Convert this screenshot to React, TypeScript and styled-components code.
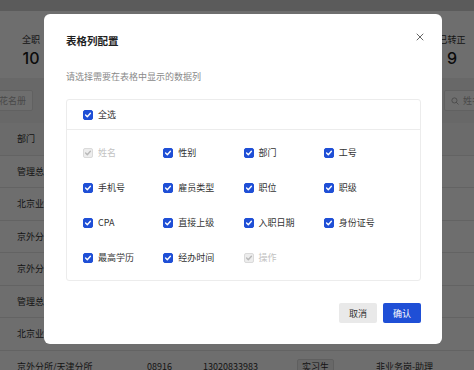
import React from "react";
import styled, { createGlobalStyle } from "styled-components";

const GlobalStyle = createGlobalStyle`
  html, body { margin: 0; padding: 0; }
  body {
    width: 474px;
    height: 370px;
    overflow: hidden;
    font-family: "Noto Sans CJK SC", "Noto Sans", sans-serif;
    color: #333;
  }
`;

const Page = styled.div`
  position: relative;
  width: 474px;
  height: 370px;
  overflow: hidden;
  background: #f1f1f1;
  display: flex;
  flex-direction: column;
`;

const TopBar = styled.div`
  height: 11px;
  flex: none;
  background: #d4d4d4;
`;

const StatsRow = styled.div`
  height: 67px;
  flex: none;
  background: #fff;
  display: flex;
  justify-content: space-between;
  padding: 23px 0 0 9px;
  box-sizing: border-box;
`;

const Stat = styled.div`
  width: 44px;
  display: flex;
  flex-direction: column;
  align-items: center;
`;

const StatLabel = styled.div`
  font-size: 9px;
  line-height: 12px;
  color: #333;
  white-space: nowrap;
`;

const StatValue = styled.div`
  margin-top: 3px;
  font-family: "Inter", "Noto Sans", sans-serif;
  font-size: 16px;
  line-height: 18px;
  font-weight: 500;
  color: #1a1a1a;
`;

const Toolbar = styled.div`
  height: 45px;
  flex: none;
  display: flex;
  align-items: center;
  justify-content: space-between;
`;

const SearchBox = styled.div<{ $align: "left" | "right" }>`
  height: 21px;
  width: 100px;
  box-sizing: border-box;
  background: #fff;
  border: 1px solid #e2e2e2;
  border-radius: 2px;
  display: flex;
  align-items: center;
  justify-content: ${(p) => (p.$align === "left" ? "flex-end" : "flex-start")};
  gap: 4px;
  padding: 0 6px;
  font-size: 9px;
  color: #aaa;
  white-space: nowrap;
  margin-left: ${(p) => (p.$align === "left" ? "-67px" : "0")};
  margin-right: ${(p) => (p.$align === "right" ? "-70px" : "0")};
`;

const Table = styled.div`
  display: flex;
  flex-direction: column;
  background: #fff;
`;

const Row = styled.div<{ $head?: boolean }>`
  height: 32.5px;
  flex: none;
  box-sizing: border-box;
  border-bottom: 1px solid #e6e6e6;
  background: ${(p) => (p.$head ? "#f7f7f7" : "#fff")};
  display: grid;
  grid-template-columns: 130px 56px 94px 79px 1fr;
  align-items: center;
  padding-left: 17px;
  font-size: 9px;
  color: #333;
  white-space: nowrap;
`;

const Tag = styled.span`
  justify-self: start;
  background: #f2f2f2;
  border: 1px solid #dcdcdc;
  padding: 0 4px;
  line-height: 13px;
  border-radius: 2px;
`;

const Overlay = styled.div`
  position: absolute;
  inset: 0;
  background: rgba(0, 0, 0, 0.57);
  padding: 14px 0 0 44px;
  box-sizing: border-box;
`;

const Modal = styled.div`
  width: 398px;
  height: 330px;
  box-sizing: border-box;
  background: #fff;
  border-radius: 6px;
  padding: 0 21px 0 22px;
  display: flex;
  flex-direction: column;
`;

const ModalHeader = styled.div`
  display: flex;
  justify-content: space-between;
  align-items: flex-start;
  padding-top: 20px;
`;

const Title = styled.div`
  font-size: 10.5px;
  line-height: 14px;
  font-weight: 700;
  color: #1f1f1f;
`;

const CloseButton = styled.button`
  width: 10px;
  height: 10px;
  padding: 0;
  margin: -2px -4px 0 0;
  border: none;
  background: none;
  display: flex;
  align-items: center;
  justify-content: center;
`;

const Subtitle = styled.div`
  margin-top: 23px;
  font-size: 9px;
  line-height: 12px;
  color: #8a8a8a;
`;

const OptionsBox = styled.div`
  margin-top: 16px;
  border: 1px solid #ececec;
  border-radius: 3px;
  display: flex;
  flex-direction: column;
`;

const AllRow = styled.div`
  height: 29px;
  border-bottom: 1px solid #ececec;
  display: flex;
  align-items: center;
  padding-left: 16px;
`;

const OptionGrid = styled.div`
  display: grid;
  grid-template-columns: repeat(4, 1fr);
  grid-auto-rows: 35px;
  padding: 5px 16px;
`;

const Option = styled.label<{ $disabled?: boolean }>`
  display: flex;
  align-items: center;
  gap: 5px;
  font-size: 9px;
  line-height: 12px;
  color: ${(p) => (p.$disabled ? "#c2c2c2" : "#333")};
`;

const Box = styled.span<{ $disabled?: boolean }>`
  width: 10px;
  height: 10px;
  box-sizing: border-box;
  border-radius: 2px;
  flex: none;
  display: flex;
  align-items: center;
  justify-content: center;
  background: ${(p) => (p.$disabled ? "#ededed" : "#1f4fd6")};
  border: 1px solid ${(p) => (p.$disabled ? "#dadada" : "#1f4fd6")};
`;

const Footer = styled.div`
  margin-top: 22px;
  display: flex;
  justify-content: flex-end;
  gap: 6px;
`;

const Button = styled.button<{ $primary?: boolean }>`
  width: 38px;
  height: 20px;
  padding: 0;
  border: none;
  border-radius: 2px;
  font-family: "Noto Sans CJK SC", sans-serif;
  font-size: 9px;
  background: ${(p) => (p.$primary ? "#1f4fd6" : "#e9e9e9")};
  color: ${(p) => (p.$primary ? "#fff" : "#333")};
`;

const Check = ({ disabled }: { disabled?: boolean }) => (
  <Box $disabled={disabled}>
    <svg width="8" height="8" viewBox="0 0 8 8">
      <path
        d="M1.6 4.1 L3.3 5.7 L6.4 2.3"
        fill="none"
        stroke={disabled ? "#b8b8b8" : "#fff"}
        strokeWidth="1.4"
        strokeLinecap="round"
        strokeLinejoin="round"
      />
    </svg>
  </Box>
);

const stats = [
  { label: "全职", value: "10" },
  { label: "兼职", value: "0" },
  { label: "实习生", value: "1" },
  { label: "试用期", value: "1" },
  { label: "已转正", value: "9" },
];

const rows = [
  ["管理总部", "08901", "13800000001", "全职", "管理岗"],
  ["北京业务部", "08902", "13800000002", "全职", "业务岗"],
  ["京外分所/上海分所", "08903", "13800000003", "全职", "业务岗"],
  ["京外分所/广州分所", "08904", "13800000004", "全职", "业务岗"],
  ["管理总部", "08905", "13800000005", "全职", "管理岗"],
  ["北京业务部", "08906", "13800000006", "全职", "业务岗"],
  ["京外分所/天津分所", "08916", "13020833983", "实习生", "非业务岗-助理"],
];

const options: { label: string; disabled?: boolean }[] = [
  { label: "姓名", disabled: true },
  { label: "性别" },
  { label: "部门" },
  { label: "工号" },
  { label: "手机号" },
  { label: "雇员类型" },
  { label: "职位" },
  { label: "职级" },
  { label: "CPA" },
  { label: "直接上级" },
  { label: "入职日期" },
  { label: "身份证号" },
  { label: "最高学历" },
  { label: "经办时间" },
  { label: "操作", disabled: true },
];

export default function App() {
  return (
    <>
      <GlobalStyle />
      <Page>
        <TopBar />
        <StatsRow>
          {stats.map((s) => (
            <Stat key={s.label}>
              <StatLabel>{s.label}</StatLabel>
              <StatValue>{s.value}</StatValue>
            </Stat>
          ))}
        </StatsRow>
        <Toolbar>
          <SearchBox $align="left">搜索花名册</SearchBox>
          <SearchBox $align="right">
            <svg width="8" height="8" viewBox="0 0 10 10">
              <circle cx="4.3" cy="4.3" r="3.2" fill="none" stroke="#aaa" strokeWidth="1.1" />
              <path d="M6.7 6.7 L9 9" stroke="#aaa" strokeWidth="1.1" strokeLinecap="round" />
            </svg>
            姓名/工号
          </SearchBox>
        </Toolbar>
        <Table>
          <Row $head>
            <span>部门</span>
            <span>工号</span>
            <span>手机号</span>
            <span>雇员类型</span>
            <span>职位</span>
          </Row>
          {rows.map((r, i) => (
            <Row key={i}>
              <span>{r[0]}</span>
              <span>{r[1]}</span>
              <span>{r[2]}</span>
              <Tag>{r[3]}</Tag>
              <span>{r[4]}</span>
            </Row>
          ))}
        </Table>
        <Overlay>
          <Modal>
            <ModalHeader>
              <Title>表格列配置</Title>
              <CloseButton aria-label="关闭">
                <svg width="8" height="8" viewBox="0 0 8 8">
                  <path d="M1 1 L7 7 M7 1 L1 7" stroke="#666" strokeWidth="1" strokeLinecap="round" />
                </svg>
              </CloseButton>
            </ModalHeader>
            <Subtitle>请选择需要在表格中显示的数据列</Subtitle>
            <OptionsBox>
              <AllRow>
                <Option>
                  <Check />
                  全选
                </Option>
              </AllRow>
              <OptionGrid>
                {options.map((o) => (
                  <Option key={o.label} $disabled={o.disabled}>
                    <Check disabled={o.disabled} />
                    {o.label}
                  </Option>
                ))}
              </OptionGrid>
            </OptionsBox>
            <Footer>
              <Button>取消</Button>
              <Button $primary>确认</Button>
            </Footer>
          </Modal>
        </Overlay>
      </Page>
    </>
  );
}
